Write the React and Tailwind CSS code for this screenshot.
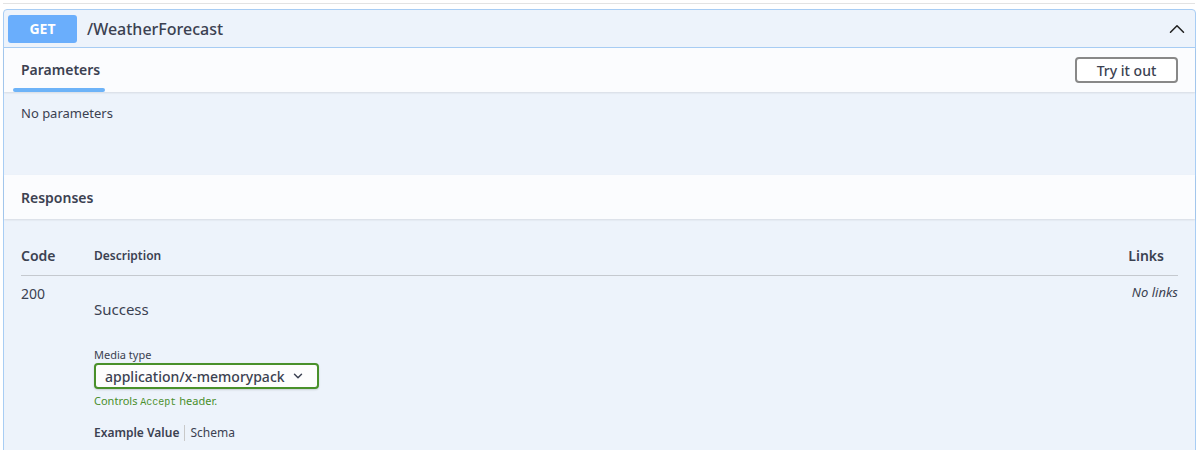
import { ChevronUp, ChevronDown } from "lucide-react";

const FONT = { fontFamily: '"Noto Sans", "Open Sans", sans-serif' };

export default function App() {
  return (
    <div className="h-[450px] w-[1200px] overflow-hidden bg-white text-[#3b4151]" style={FONT}>
      <div className="mx-[3px] mt-[3px] mr-[5px] h-px bg-[#e3e3e3]" />
      <div className="mt-[5px] ml-[3px] mr-[4px] min-h-[520px] rounded-t-[4px] border border-[#a8cdf4] bg-[#edf3fb]">
        {/* summary */}
        <div className="flex h-[38px] items-center border-b border-[#a8cdf4] pl-[4px] pr-[5px]">
          <span className="flex h-[28px] w-[69px] items-center justify-center rounded-[3px] bg-[#6aaefc] text-[14px] font-bold text-white">
            GET
          </span>
          <span className="ml-[10px] text-[16px] font-medium text-[#3b4151]">/WeatherForecast</span>
          <ChevronUp className="ml-auto text-[#222]" size={26} strokeWidth={1.4} />
        </div>

        {/* parameters */}
        <div className="flex h-[44px] items-center justify-between bg-[#fbfcfe] pl-[9px] pr-[17px] shadow-[0_1px_2px_rgba(0,0,0,0.1)]">
          <div className="flex h-full flex-col justify-end">
            <span className="px-[8px] pb-[8px] text-[14px] font-semibold text-[#3b4151]">Parameters</span>
            <div className="h-[4px] w-[92px] rounded-sm bg-[#6db3f8]" />
          </div>
          <button className="h-[26px] w-[103px] rounded-[4px] border-2 border-[#888] bg-white text-[14px] font-medium text-[#3b4151]">
            Try it out
          </button>
        </div>
        <div className="h-[83px] px-[17px] pt-[12px] text-[13px] text-[#3b4151]">No parameters</div>

        {/* responses */}
        <div className="flex h-[44px] items-center bg-[#fbfcfe] px-[17px] shadow-[0_1px_2px_rgba(0,0,0,0.1)]">
          <span className="text-[14px] font-semibold text-[#3b4151]">Responses</span>
        </div>
        <div className="px-[17px] pt-[25px]">
          <div className="flex h-[32px] items-start border-b border-[#c5c9cf] pt-[2px] leading-[20px]">
            <span className="w-[73px] text-[14px] font-semibold">Code</span>
            <span className="text-[12px] font-semibold">Description</span>
            <span className="ml-auto pr-[14px] text-[14px] font-semibold">Links</span>
          </div>
          <div className="flex pt-[7px]">
            <span className="w-[73px] text-[14px]">200</span>
            <div className="flex-1">
              <div className="pt-[15px] text-[15px]">Success</div>
              <div className="pt-[26px] text-[11px]">Media type</div>
              <div className="flex h-[26px] w-[225px] items-center justify-between rounded-[4px] border-2 border-[#49902a] bg-[#fdfdfd] pl-[9px] pr-[12px] shadow-[0_1px_2px_rgba(0,0,0,0.15)]">
                <span className="text-[14px] font-medium">application/x-memorypack</span>
                <ChevronDown size={14} strokeWidth={2.5} />
              </div>
              <div className="mt-[4px] text-[11px] text-[#4a8f2c]">
                Controls{" "}
                <span className="text-[10px]" style={{ fontFamily: '"Liberation Mono", monospace' }}>
                  Accept
                </span>{" "}
                header.
              </div>
              <div className="mt-[14px] flex items-center text-[12px]">
                <span className="font-semibold">Example Value</span>
                <span className="mx-[5px] h-[16px] w-px bg-[#c9c9c9]" />
                <span>Schema</span>
              </div>
            </div>
            <span className="text-[13px] italic">No links</span>
          </div>
        </div>
      </div>
    </div>
  );
}
